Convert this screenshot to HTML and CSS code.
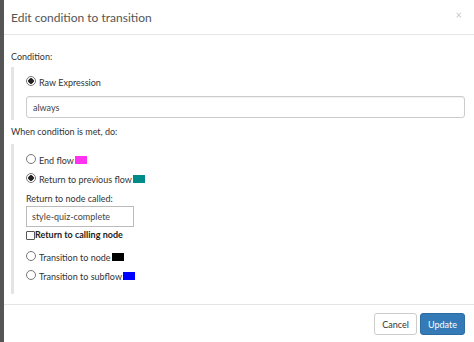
FILE: index.html
```html
<!DOCTYPE html>
<html>
<head>
<meta charset="utf-8">
<link rel="stylesheet" href="styles.css">
</head>
<body>
<div class="strip"></div>
<div class="modal">
  <div class="header">
    <span class="title">Edit condition to transition</span>
    <span class="close">&times;</span>
  </div>
  <div class="body">
    <div class="label first">Condition:</div>
    <div class="section s1">
      <label class="row"><input type="radio" name="cond" checked>Raw Expression</label>
      <input class="text wide" type="text" value="always">
    </div>
    <div class="label second">When condition is met, do:</div>
    <div class="section s2">
      <label class="row"><input type="radio" name="act">End flow<span class="swatch pink"></span></label>
      <label class="row gap"><input type="radio" name="act" checked>Return to previous flow<span class="swatch teal"></span></label>
      <div class="label sub">Return to node called:</div>
      <input class="text narrow" type="text" value="style-quiz-complete">
      <label class="row check"><input type="checkbox"><b>Return to calling node</b></label>
      <label class="row big"><input type="radio" name="act">Transition to node<span class="swatch black"></span></label>
      <label class="row gap"><input type="radio" name="act">Transition to subflow<span class="swatch blue"></span></label>
    </div>
  </div>
  <div class="footer">
    <button class="btn cancel">Cancel</button>
    <button class="btn update">Update</button>
  </div>
</div>
</body>
</html>
```
FILE: styles.css
```css
html, body {
  margin: 0;
  padding: 0;
  height: 342px;
  overflow: hidden;
}
body {
  display: flex;
  background: #fff;
  font-family: Lato, "Open Sans", sans-serif;
  font-size: 9px;
  color: #333;
}
.strip {
  width: 4px;
  background: #555;
  flex: none;
}
.modal {
  flex: 1;
  display: flex;
  flex-direction: column;
  background: #fff;
}
.header {
  height: 34px;
  border-bottom: 1px solid #e5e5e5;
  display: flex;
  align-items: center;
  justify-content: space-between;
  padding: 0 12px 0 7px;
}
.title {
  font-size: 12px;
  color: #555;
}
.close {
  font-size: 11px;
  color: #c8c8c8;
  margin-top: -6px;
}
.body {
  padding: 0 9px 0 7px;
  flex: 1;
}
.label {
  height: 12px;
  line-height: 12px;
}
.label.first { margin-top: 16px; }
.label.second { margin-top: 6px; }
.label.sub { margin-top: 7px; }
.section {
  border-left: 3px solid #e4e4e4;
  padding-left: 12px;
}
.s1 {
  margin-top: 4px;
  padding-top: 10px;
  padding-bottom: 2px;
}
.s2 {
  margin-top: 6px;
  padding-top: 11px;
  padding-bottom: 11px;
}
.row {
  display: flex;
  align-items: center;
  height: 12px;
  line-height: 12px;
}
.row.gap { margin-top: 7px; }
.row.big { margin-top: 11px; }
.row.check { margin-top: 2px; }
input[type=radio] {
  appearance: none;
  -webkit-appearance: none;
  width: 10px;
  height: 10px;
  margin: 0 3px 0 0;
  border: 1px solid #777;
  border-radius: 50%;
  background: #fff;
  box-sizing: border-box;
  position: relative;
  top: -2px;
}
input[type=radio]:checked {
  background: radial-gradient(circle, #222 0, #222 2.5px, #fff 3px);
}
input[type=checkbox] {
  appearance: none;
  -webkit-appearance: none;
  width: 9px;
  height: 9px;
  margin: 0;
  border: 1px solid #555;
  border-radius: 1px;
  box-sizing: border-box;
}
.check b {
  font-weight: 700;
  color: #222;
}
.swatch {
  display: inline-block;
  width: 12px;
  height: 8px;
  margin-left: 1px;
  position: relative;
  top: -1px;
}
.pink { background: #ff33ee; }
.teal { background: #008b8b; }
.black { background: #000; }
.blue { background: #0000ff; }
.text {
  display: block;
  box-sizing: border-box;
  border: 1px solid #ccc;
  font-family: inherit;
  font-size: 9px;
  color: #444;
  padding: 0 6px;
  margin: 0;
  outline: none;
}
.text.wide {
  margin-top: 7px;
  width: 100%;
  height: 22px;
  border-radius: 3px;
  box-shadow: inset 0 1px 1px rgba(0,0,0,0.06);
}
.text.narrow {
  margin-top: 1px;
  width: 108px;
  height: 21px;
  padding: 0 5px;
  border-color: #bbb;
}
.footer {
  border-top: 1px solid #e5e5e5;
  height: 38px;
  display: flex;
  justify-content: flex-end;
  align-items: flex-start;
  padding: 8px 9px 0 0;
  gap: 3px;
  box-sizing: border-box;
}
.btn {
  height: 22px;
  font-family: inherit;
  font-size: 9px;
  border-radius: 3px;
  padding: 0 6px;
  cursor: pointer;
}
.cancel {
  background: #fff;
  border: 1px solid #ccc;
  color: #333;
  width: 43px;
}
.update {
  background: #337ab7;
  border: 1px solid #2e6da4;
  color: #fff;
  width: 45px;
}
```
